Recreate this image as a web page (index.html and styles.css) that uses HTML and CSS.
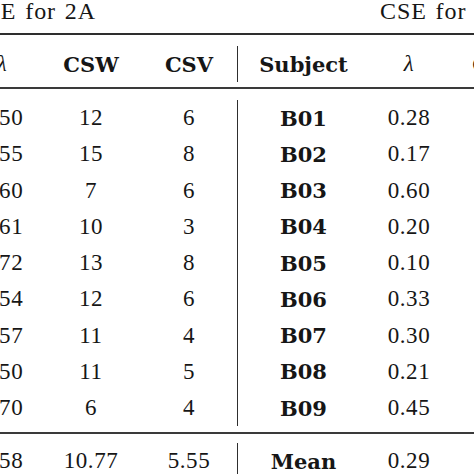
FILE: index.html
```html
<!DOCTYPE html>
<html>
<head>
<meta charset="utf-8">
<link rel="stylesheet" href="styles.css">
</head>
<body>
<div class="page">
  <div class="captions">
    <div class="cap-left">CSE for 2A</div>
    <div class="cap-right">CSE for 2B</div>
  </div>
  <div class="rule top"></div>
  <div class="section head">
    <div class="row">
      <div class="c c1"><i>λ</i></div>
      <div class="c c2 b">CSW</div>
      <div class="c c3 b">CSV</div>
      <div class="c c4 b sep">Subject</div>
      <div class="c c5"><i>λ</i></div>
      <div class="c c6 b">CSW</div>
    </div>
  </div>
  <div class="rule mid"></div>
  <div class="section body">
    <div class="row"><div class="c c1">0.50</div><div class="c c2">12</div><div class="c c3">6</div><div class="c c4 b sep">B01</div><div class="c c5">0.28</div><div class="c c6">8</div></div>
    <div class="row"><div class="c c1">0.55</div><div class="c c2">15</div><div class="c c3">8</div><div class="c c4 b sep">B02</div><div class="c c5">0.17</div><div class="c c6">9</div></div>
    <div class="row"><div class="c c1">0.60</div><div class="c c2">7</div><div class="c c3">6</div><div class="c c4 b sep">B03</div><div class="c c5">0.60</div><div class="c c6">7</div></div>
    <div class="row"><div class="c c1">0.61</div><div class="c c2">10</div><div class="c c3">3</div><div class="c c4 b sep">B04</div><div class="c c5">0.20</div><div class="c c6">10</div></div>
    <div class="row"><div class="c c1">0.72</div><div class="c c2">13</div><div class="c c3">8</div><div class="c c4 b sep">B05</div><div class="c c5">0.10</div><div class="c c6">12</div></div>
    <div class="row"><div class="c c1">0.54</div><div class="c c2">12</div><div class="c c3">6</div><div class="c c4 b sep">B06</div><div class="c c5">0.33</div><div class="c c6">8</div></div>
    <div class="row"><div class="c c1">0.57</div><div class="c c2">11</div><div class="c c3">4</div><div class="c c4 b sep">B07</div><div class="c c5">0.30</div><div class="c c6">9</div></div>
    <div class="row"><div class="c c1">0.50</div><div class="c c2">11</div><div class="c c3">5</div><div class="c c4 b sep">B08</div><div class="c c5">0.21</div><div class="c c6">11</div></div>
    <div class="row"><div class="c c1">0.70</div><div class="c c2">6</div><div class="c c3">4</div><div class="c c4 b sep">B09</div><div class="c c5">0.45</div><div class="c c6">6</div></div>
  </div>
  <div class="rule mid"></div>
  <div class="section foot">
    <div class="row"><div class="c c1">0.58</div><div class="c c2">10.77</div><div class="c c3">5.55</div><div class="c c4 b sep">Mean</div><div class="c c5">0.29</div><div class="c c6">8.89</div></div>
  </div>
</div>
</body>
</html>
```

FILE: styles.css
```css
html, body {
  margin: 0;
  padding: 0;
  background: #ffffff;
  overflow: hidden;
  width: 474px;
  height: 474px;
}
.page {
  margin-left: -42px;
  width: 593px;
  color: #161616;
  font-family: "Liberation Serif", "Times New Roman", serif;
  font-size: 23px;
  letter-spacing: 0.6px;
}
.captions {
  display: flex;
  height: 33px;
  align-items: flex-start;
  font-size: 24px;
  letter-spacing: 0.9px;
  word-spacing: 2px;
}
.cap-left {
  width: 138px;
  text-align: right;
  line-height: 22px;
}
.cap-right {
  margin-left: 284px;
  line-height: 22px;
}
.rule {
  background: #2e2e2e;
}
.rule.top { height: 2px; }
.rule.mid { height: 2px; background: #3a3a3a; }
.section.head { padding: 11px 0 5px; }
.section.body { padding: 11px 0 6px; }
.section.foot { padding: 9px 0 0; }
.row {
  display: flex;
  height: 36.25px;
}
.head .row { height: 36px; }
.c {
  display: flex;
  align-items: center;
  justify-content: center;
  white-space: nowrap;
}
.c1 { width: 88px; }
.c2 { width: 90px; }
.c3 { width: 96px; padding-left: 5px; }
.c4 { width: 132px; }
.c5 { width: 80px; }
.c6 { width: 102px; }
.sep {
  border-left: 1.5px solid #2e2e2e;
  box-sizing: border-box;
}
.b {
  font-family: "DejaVu Serif", serif;
  font-weight: bold;
  font-size: 21px;
  letter-spacing: 0;
}
i {
  font-style: italic;
}
```
